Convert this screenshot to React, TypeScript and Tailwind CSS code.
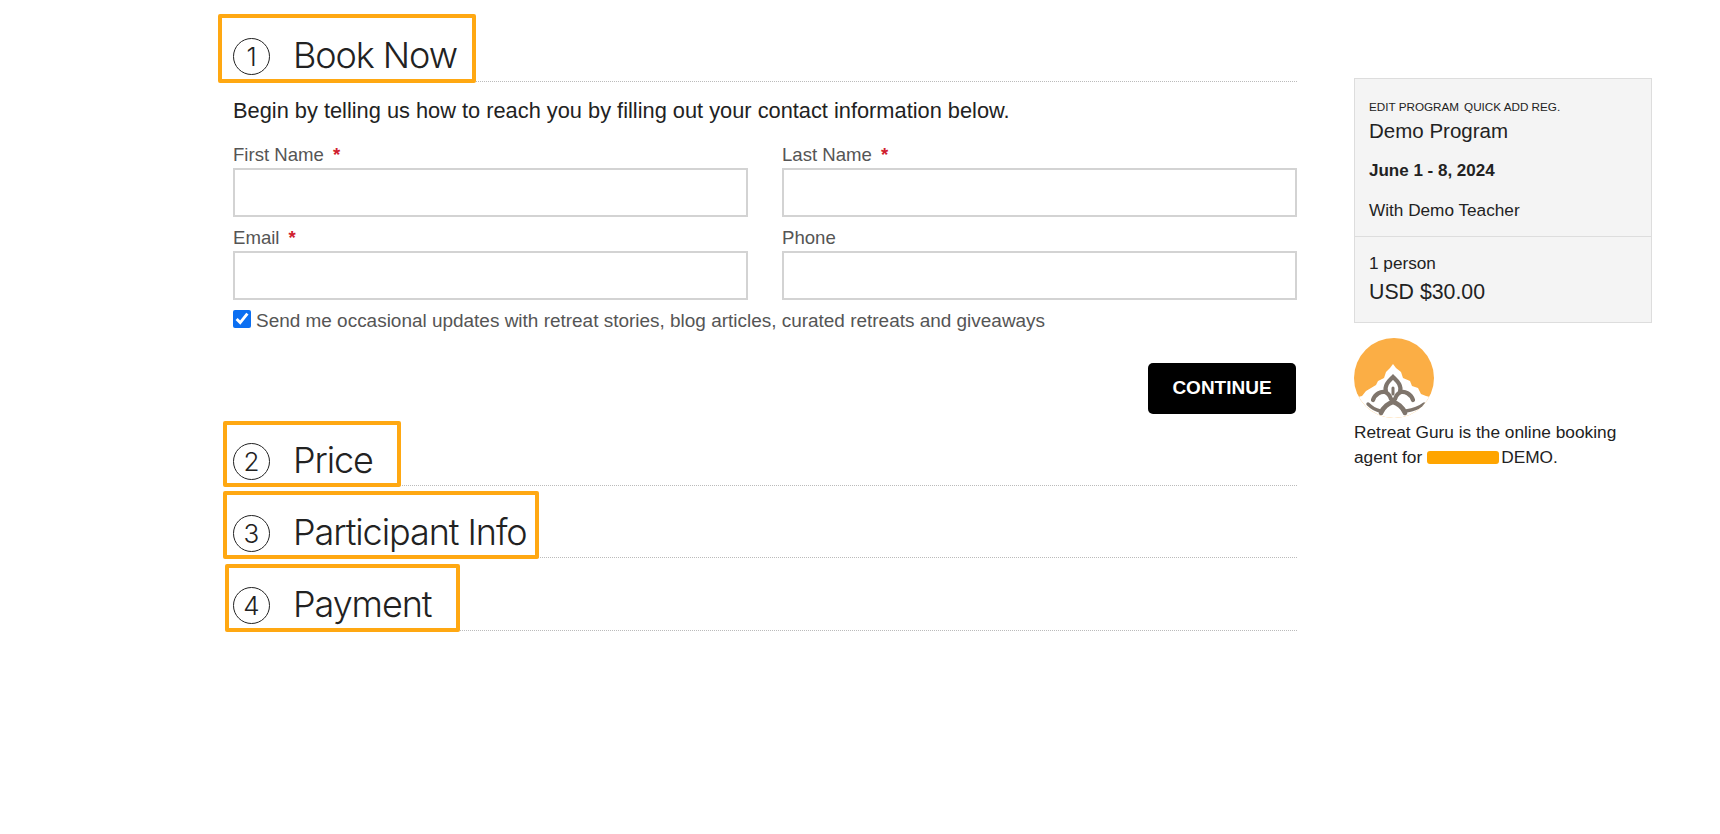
import React from "react";

const sans = "font-['Liberation_Sans',Arial,sans-serif]";
const light = "font-['Inter',sans-serif] font-light";

type HeadingProps = {
  num: number;
  title: string;
  box: string; // orange box size + offset for this step
};

function StepHeading({ num, title, box }: HeadingProps) {
  return (
    <div className="flex border-b border-dotted border-[#bbbbbb]">
      <div className={`-mb-[2px] flex items-end rounded-[2px] border-[4px] border-[#ffa812] ${box}`}>
        <span className={`flex h-[37px] w-[37px] shrink-0 items-center justify-center rounded-full border border-[#222222] text-[26px] font-extralight leading-none text-[#222222] ${light}`}>
          {num}
        </span>
        <span className={`ml-[23px] whitespace-nowrap text-[36px] font-extralight leading-[40px] tracking-[-0.03em] text-[#222222] ${light}`}>
          {title}
        </span>
      </div>
    </div>
  );
}

function Field({ label, required }: { label: string; required?: boolean }) {
  return (
    <label className="block">
      <span className="block h-[25px] text-[18.6px] leading-[24px] text-[#555555]">
        {label}
        {required && <span className="ml-[9px] font-bold text-[#d0202e]">*</span>}
      </span>
      <input
        type="text"
        className="block h-[49px] w-full border-2 border-[#d3d3d3] bg-white outline-none"
      />
    </label>
  );
}

function LotusLogo() {
  return (
    <svg viewBox="0 0 80 80" className="block h-[80px] w-[80px]">
      <defs>
        <clipPath id="logoClip">
          <circle cx="40" cy="40" r="40" />
        </clipPath>
      </defs>
      <g clipPath="url(#logoClip)">
        <rect width="80" height="80" fill="#fbae45" />
        <path
          d="M39 26 L42 30 L47 34 L49 40 L56 43 L58 48 L64 50 L67 56 L72 58 L80 60 L80 80 L0 80 L0 60 L8 58 L12 53 L17 50 L22 47 L24 43 L30 40 L32 34 L36 30 Z"
          fill="#ffffff"
        />
        <g fill="none" stroke="#7f756c" strokeLinecap="round">
          <path d="M32 54 C30 47 35 43 39 39 C43 43 48 47 46 54" strokeWidth="4.2" />
          <path d="M39 50 L39 56" strokeWidth="3" />
          <path d="M19 62 C21 56 27 53 31 54 C34 55 36 58 37 61" strokeWidth="4.2" />
          <path d="M59 62 C57 56 51 53 47 54 C44 55 42 58 41 61" strokeWidth="4.2" />
          <path d="M27 75 C29 69 35 65 39 64 C43 65 49 69 51 75" strokeWidth="4.6" />
          <path d="M14 66 C18 70 22 72 26 73" strokeWidth="3.4" />
          <path d="M52 73 C58 72 65 70 70 66" strokeWidth="3.4" />
        </g>
      </g>
    </svg>
  );
}

export default function App() {
  return (
    <div className={`flex min-h-[834px] bg-white text-[#222222] ${sans}`}>
      <main className="ml-[233px] w-[1064px] pt-[14px]">
        <StepHeading num={1} title="Book Now" box="-ml-[15px] h-[69px] w-[258px] pl-[11px] pb-[4px]" />

        <p className="mt-[14px] whitespace-nowrap text-[21.8px] leading-[30px] text-[#222222]">
          Begin by telling us how to reach you by filling out your contact information below.
        </p>

        {/* contact form */}
        <div className="mt-[17px] grid grid-cols-2 gap-x-[34px] gap-y-[9px]">
          <Field label="First Name" required />
          <Field label="Last Name" required />
          <Field label="Email" required />
          <Field label="Phone" />
        </div>

        <label className="mt-[9px] flex h-[24px] items-center">
          <input type="checkbox" defaultChecked className="m-0 mb-[4px] h-[18px] w-[18px] accent-[#0b6ff2]" />
          <span className="ml-[5px] whitespace-nowrap text-[18.97px] text-[#555555]">
            Send me occasional updates with retreat stories, blog articles, curated retreats and giveaways
          </span>
        </label>

        <div className="mt-[30px] flex justify-end pr-px">
          <button
            type="button"
            className="h-[51px] w-[148px] rounded-[5px] bg-black text-[19px] font-bold text-white"
          >
            CONTINUE
          </button>
        </div>

        <div className="mt-[7px]">
          <StepHeading num={2} title="Price" box="-ml-[10px] h-[66px] w-[178px] pl-[6px] pb-[3px]" />
        </div>
        <div className="mt-[5px]">
          <StepHeading num={3} title="Participant Info" box="-ml-[10px] h-[68px] w-[316px] pl-[6px] pb-[3px]" />
        </div>
        <div className="mt-[6px]">
          <StepHeading num={4} title="Payment" box="-ml-[8px] h-[68px] w-[235px] pl-[4px] pb-[4px]" />
        </div>
      </main>

      <aside className="ml-[57px] w-[298px] pt-[78px]">
        <div className="border border-[#dddddd] bg-[#f4f4f4]">
          <div className="h-[158px] border-b border-[#dddddd] pl-[14px] pt-[20px]">
            <div className="flex gap-[5px] text-[11.7px] leading-[16px]">
              <span>EDIT PROGRAM</span>
              <span>QUICK ADD REG.</span>
            </div>
            <div className="mt-[3px] text-[20.5px] leading-[26px]">Demo Program</div>
            <div className="mt-[15px] text-[17px] font-bold leading-[24px]">June 1 - 8, 2024</div>
            <div className="mt-[15px] text-[17.2px] leading-[24px]">With Demo Teacher</div>
          </div>
          <div className="h-[85px] pl-[14px] pt-[14px]">
            <div className="text-[17.2px] leading-[24px]">1 person</div>
            <div className="mt-[3px] text-[21.3px] leading-[28px]">USD $30.00</div>
          </div>
        </div>

        <div className="mt-[15px]">
          <LotusLogo />
        </div>
        <div className="mt-[2px] text-[17.3px] leading-[25px]">
          <p>Retreat Guru is the online booking</p>
          <p className="flex items-center">
            <span>agent for</span>
            <span className="ml-[5px] mr-[2px] h-[13px] w-[72px] rounded-[3px] bg-[#ffa500]" />
            <span>DEMO.</span>
          </p>
        </div>
      </aside>
    </div>
  );
}
